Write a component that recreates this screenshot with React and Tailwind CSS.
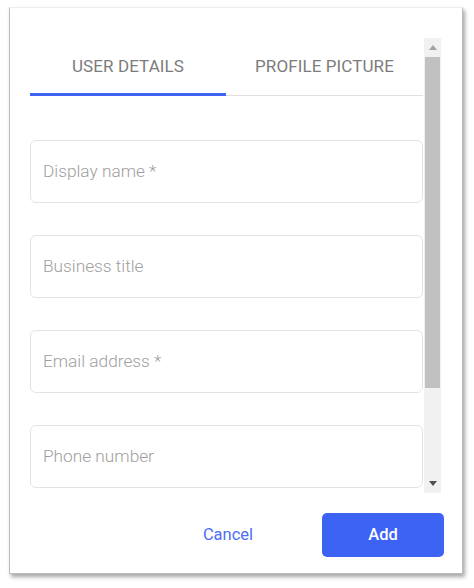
export default function App() {
  const fields = ["Display name *", "Business title", "Email address *", "Phone number"];
  return (
    <div className="w-[474px] h-[588px] bg-white pt-[7px] pl-[9px]" style={{ fontFamily: "Roboto, 'Liberation Sans', sans-serif" }}>
      <div className="w-[454px] h-[567px] bg-white border-l border-r border-b border-t border-t-[#eeeeee] border-[#bdbdbd] shadow-[2px_3px_4px_rgba(0,0,0,0.35)] flex flex-col">
        <div className="flex mt-[30px] h-[455px]">
          <div className="ml-[20px] w-[393px] flex flex-col overflow-hidden">
            <div className="flex border-b border-[#e0e0e0]">
              <div className="w-[196px] h-[57px] flex flex-col">
                <div className="flex-1 flex items-center justify-center pt-[2px] text-[17px] text-[#7c7c7c] tracking-[0.1px]">USER DETAILS</div>
                <div className="h-[3px] bg-[#3d63f5] -mb-px"></div>
              </div>
              <div className="w-[197px] h-[57px] flex items-center justify-center pt-[1px] text-[17px] text-[#7c7c7c] tracking-[0.1px]">PROFILE PICTURE</div>
            </div>
            <div className="flex flex-col gap-[32px] mt-[44px]">
              {fields.map((f) => (
                <div key={f} className="h-[63px] border border-[#e3e3e3] rounded-[6px] flex items-center px-[12px] pt-[1px] text-[17.25px] text-[#9e9e9e] font-light">
                  {f}
                </div>
              ))}
            </div>
          </div>
          <div className="ml-[1px] w-[17px] h-[455px] bg-[#f1f1f1] flex flex-col">
            <div className="h-[19px] flex items-center justify-center">
              <svg width="8" height="5" viewBox="0 0 8 5"><path d="M0 5 L4 0 L8 5 Z" fill="#a3a3a3" /></svg>
            </div>
            <div className="h-[331px] mx-px bg-[#c1c1c1]"></div>
            <div className="flex-1"></div>
            <div className="h-[19px] flex items-center justify-center">
              <svg width="8" height="5" viewBox="0 0 8 5"><path d="M0 0 L8 0 L4 5 Z" fill="#505050" /></svg>
            </div>
          </div>
        </div>
        <div className="flex items-center mt-[20px] h-[44px]">
          <div className="ml-[192px] w-[52px] text-center text-[16.5px] text-[#4b6ef5]">Cancel</div>
          <div className="ml-[68px] w-[122px] h-[44px] rounded-[5px] bg-[#3d63f5] flex items-center justify-center text-[16.5px] font-medium text-white">Add</div>
        </div>
      </div>
    </div>
  );
}
